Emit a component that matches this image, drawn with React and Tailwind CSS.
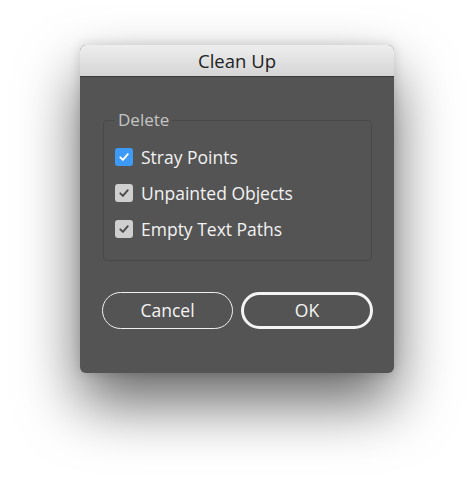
import React from "react";

function Check({ blue }) {
  return (
    <span
      className={
        "flex h-[18px] w-[18px] items-center justify-center rounded-[3px] " +
        (blue ? "bg-[#3d9bf7]" : "bg-[#cfcfcf]")
      }
    >
      <svg width="12" height="12" viewBox="0 0 12 12">
        <path
          d="M2.3 6.3 L4.9 8.9 L9.8 3.2"
          fill="none"
          stroke={blue ? "#ffffff" : "#4a4a4a"}
          strokeWidth="1.9"
          strokeLinecap="round"
          strokeLinejoin="round"
        />
      </svg>
    </span>
  );
}

function Row({ label, blue }) {
  return (
    <div className="flex h-[36px] items-center gap-[8px]">
      <Check blue={blue} />
      <span className="text-[17.5px] font-medium text-[#f2f2f2]">{label}</span>
    </div>
  );
}

export default function App() {
  return (
    <div
      className="h-[488px] w-[474px] bg-white pl-[80px] pt-[45px]"
      style={{ fontFamily: '"Open Sans", "Noto Sans", sans-serif' }}
    >
      <div className="flex h-[328px] w-[314px] flex-col overflow-hidden rounded-[6px] bg-[#545454] shadow-[0_30px_60px_rgba(0,0,0,0.6),0_0_12px_rgba(0,0,0,0.15)]">
        <div className="flex h-[32px] items-center justify-center border-b border-[#3c3c3c] bg-gradient-to-b from-[#eeeeee] to-[#d5d5d5]">
          <span className="text-[18.5px] text-[#222222]">Clean Up</span>
        </div>
        <div className="flex flex-col pl-[23px] pr-[22px] pt-[33px]">
          <fieldset className="rounded-[4px] border border-[#494949] pb-[13px] pl-[11px]">
            <legend className="px-[3px] text-[17px] leading-[20px] font-medium text-[#c4c4c4]">
              Delete
            </legend>
            <div className="flex flex-col pt-[9px]">
              <Row label="Stray Points" blue />
              <Row label="Unpainted Objects" />
              <Row label="Empty Text Paths" />
            </div>
          </fieldset>
        </div>
        <div className="flex gap-[8px] pl-[22px] pt-[31px]">
          <button className="flex h-[37px] w-[131px] items-center justify-center rounded-full border-[1.5px] border-[#f0f0f0] text-[17.5px] font-medium text-[#f4f4f4]">
            Cancel
          </button>
          <button className="flex h-[37px] w-[132px] items-center justify-center rounded-full border-[3px] border-[#f4f4f4] text-[17.5px] font-medium text-[#f4f4f4]">
            OK
          </button>
        </div>
      </div>
    </div>
  );
}
